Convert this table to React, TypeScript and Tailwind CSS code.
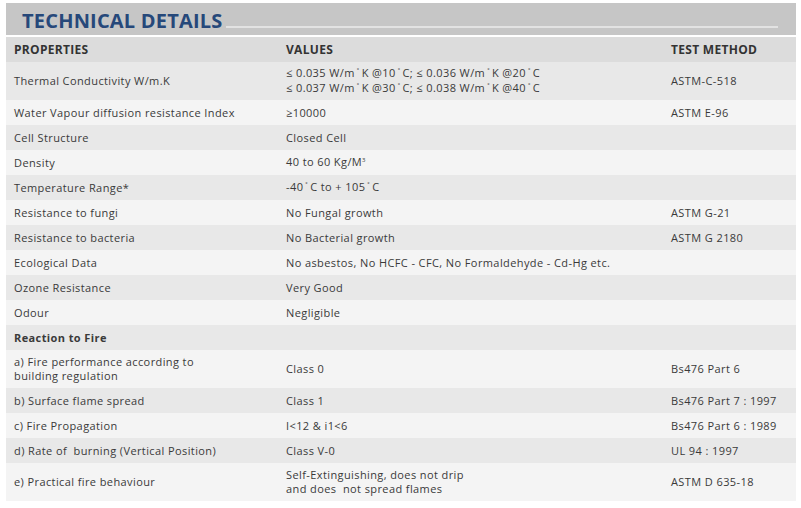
import React from "react";

type Row = {
  prop: React.ReactNode;
  value: React.ReactNode;
  test?: string;
  tall?: boolean;
  bold?: boolean;
};

const deg = <span className="text-[8px] relative -top-[3px] px-[2px]">˚</span>;

const rows: Row[] = [
  {
    prop: "Thermal Conductivity W/m.K",
    value: (
      <>
        <div>
          ≤ 0.035 W/m{deg}K @10{deg}C; ≤ 0.036 W/m{deg}K @20{deg}C
        </div>
        <div>
          ≤ 0.037 W/m{deg}K @30{deg}C; ≤ 0.038 W/m{deg}K @40{deg}C
        </div>
      </>
    ),
    test: "ASTM-C-518",
    tall: true,
  },
  { prop: "Water Vapour diffusion resistance Index", value: "≥10000", test: "ASTM E-96" },
  { prop: "Cell Structure", value: "Closed Cell" },
  {
    prop: "Density",
    value: (
      <>
        40 to 60 Kg/M<span className="text-[6px] relative -top-[4px]">3</span>
      </>
    ),
  },
  {
    prop: "Temperature Range*",
    value: (
      <>
        -40{deg}C to + 105{deg}C
      </>
    ),
  },
  { prop: "Resistance to fungi", value: "No Fungal growth", test: "ASTM G-21" },
  { prop: "Resistance to bacteria", value: "No Bacterial growth", test: "ASTM G 2180" },
  { prop: "Ecological Data", value: "No asbestos, No HCFC - CFC, No Formaldehyde - Cd-Hg etc." },
  { prop: "Ozone Resistance", value: "Very Good" },
  { prop: "Odour", value: "Negligible" },
  { prop: "Reaction to Fire", value: "", bold: true },
  {
    prop: (
      <>
        <div>a) Fire performance according to</div>
        <div>building regulation</div>
      </>
    ),
    value: "Class 0",
    test: "Bs476 Part 6",
    tall: true,
  },
  { prop: "b) Surface flame spread", value: "Class 1", test: "Bs476 Part 7 : 1997" },
  { prop: "c) Fire Propagation", value: "I<12 & i1<6", test: "Bs476 Part 6 : 1989" },
  { prop: "d) Rate of  burning (Vertical Position)", value: "Class V-0", test: "UL 94 : 1997" },
  {
    prop: "e) Practical fire behaviour",
    value: (
      <>
        <div>Self-Extinguishing, does not drip</div>
        <div>and does  not spread flames</div>
      </>
    ),
    test: "ASTM D 635-18",
    tall: true,
  },
];

export default function App() {
  return (
    <div
      className="w-[801px] h-[508px] bg-white pt-[3px] pl-[6px] pr-[5px] text-[#3a3a3a]"
      style={{ fontFamily: '"Open Sans", "Liberation Sans", sans-serif' }}
    >
      <div className="h-[32px] bg-[#c6c6c6] flex items-end pl-[16px] pr-[18px] pb-[1px]">
        <h1 className="text-[20px] leading-[26px] font-bold text-[#26487a] tracking-[0.2px] whitespace-nowrap">
          TECHNICAL DETAILS
        </h1>
        <div className="flex-1 h-[2px] bg-[#e2e2e2] ml-[4px] mb-[6px]" />
      </div>
      <div className="h-[2px] bg-white" />
      <div className="grid grid-cols-[272px_385px_1fr] h-[25px] items-center bg-[#dcdcdc] text-[12px] font-bold tracking-[0.3px] text-[#333] whitespace-nowrap">
        <div className="pl-[8px]">PROPERTIES</div>
        <div className="pl-[8px]">VALUES</div>
        <div className="pl-[8px]">TEST METHOD</div>
      </div>
      {rows.map((r, i) => (
        <div
          key={i}
          className={`grid grid-cols-[272px_385px_1fr] items-center text-[11px] leading-[14px] tracking-[0.4px] whitespace-pre ${
            r.tall ? "h-[38px]" : "h-[25px]"
          } ${i % 2 === 0 ? "bg-[#e8e8e8]" : "bg-[#f4f4f4]"}`}
        >
          <div className={`pl-[8px] ${r.bold ? "font-bold" : ""}`}>{r.prop}</div>
          <div className="pl-[8px]">{r.value}</div>
          <div className="pl-[8px]">{r.test}</div>
        </div>
      ))}
    </div>
  );
}
